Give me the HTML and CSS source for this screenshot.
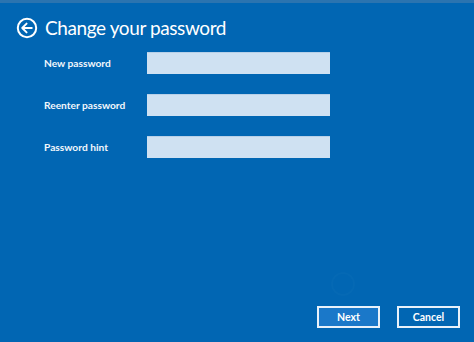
FILE: index.html
```html
<!DOCTYPE html>
<html>
<head>
<meta charset="utf-8">
<link rel="stylesheet" href="styles.css">
</head>
<body>
<div class="page">
  <div class="header">
    <svg class="back" width="22" height="22" viewBox="0 0 22 22">
      <circle cx="11" cy="11" r="9.2" fill="none" stroke="#fff" stroke-width="2"/>
      <path d="M6.2 11 H15.8 M10.6 6.6 L6.2 11 L10.6 15.4" fill="none" stroke="#fff" stroke-width="1.9" stroke-linecap="round" stroke-linejoin="round"/>
    </svg>
    <h1 class="title">Change your password</h1>
  </div>
  <div class="form">
    <label class="label">New password</label>
    <div class="input"></div>
    <label class="label">Reenter password</label>
    <div class="input"></div>
    <label class="label">Password hint</label>
    <div class="input"></div>
  </div>
  <div class="spacer"><div class="ghost"></div></div>
  <div class="buttons">
    <div class="btn btn-primary">Next</div>
    <div class="btn">Cancel</div>
  </div>
</div>
</body>
</html>
```
FILE: styles.css
```css
html, body {
  margin: 0;
  padding: 0;
}
body {
  background: #0166b3;
  font-family: "Lato", "Open Sans", sans-serif;
  color: #fff;
}
.page {
  height: 342px;
  box-sizing: border-box;
  display: flex;
  flex-direction: column;
  border-top: 3px solid #2b74b0;
}
.header {
  display: flex;
  align-items: center;
  gap: 7px;
  padding: 13px 0 0 16px;
}
.back {
  display: block;
}
.title {
  margin: 0;
  font-size: 19px;
  font-weight: 400;
  line-height: 24px;
  letter-spacing: -0.4px;
}
.form {
  display: grid;
  grid-template-columns: 103px 183px;
  row-gap: 20px;
  padding: 12px 0 0 44px;
  align-items: center;
}
.label {
  font-size: 10.2px;
  font-weight: 700;
  line-height: 22px;
  color: #f2f7fc;
}
.input {
  height: 22px;
  background: #cfe1f2;
  box-sizing: border-box;
  border-top: 1px solid #b8d0e8;
}
.spacer {
  flex: 1;
  position: relative;
}
.ghost {
  position: absolute;
  left: 331px;
  top: 114px;
  width: 20px;
  height: 20px;
  border-radius: 50%;
  border: 2px solid rgba(255, 255, 255, 0.02);
}
.buttons {
  display: flex;
  justify-content: flex-end;
  gap: 17px;
  padding: 0 14px 14px 0;
}
.btn {
  width: 63px;
  height: 22px;
  box-sizing: border-box;
  border: 2px solid #e8f1fa;
  font-size: 10.5px;
  font-weight: 700;
  display: flex;
  align-items: center;
  justify-content: center;
}
.btn-primary {
  background: #1a78c9;
}
```
